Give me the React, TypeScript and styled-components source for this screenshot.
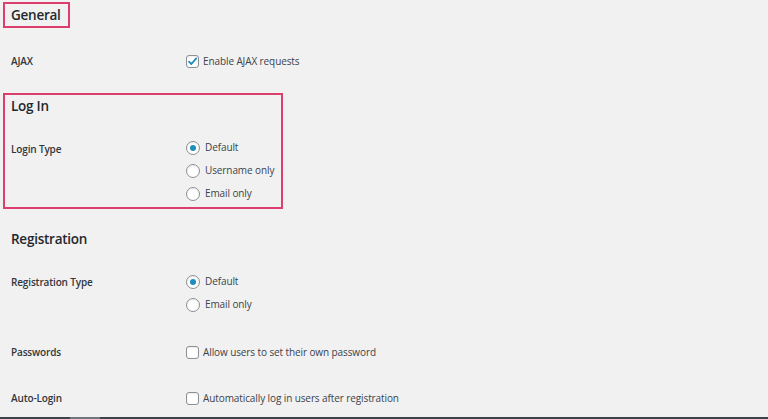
import { createGlobalStyle } from "styled-components"
import styled from "styled-components"

const GlobalStyle = createGlobalStyle`
  html, body {
    margin: 0;
    padding: 0;
    height: 419px;
    overflow: hidden;
    background: #f1f1f1;
  }
  body {
    font-family: "Open Sans", "Noto Sans", Arial, sans-serif;
    color: #1d2327;
  }
`

const Page = styled.div`
  height: 419px;
  display: flex;
  flex-direction: column;
  padding: 2px 0 0 11px;
  box-sizing: border-box;
`

const Highlight = styled.div<{ $width?: number; $gap?: number }>`
  margin: ${p => p.$gap ?? 0}px 0 0 -8px;
  border: 2px solid #dc3f6e;
  padding: 2px 7px 2px 6px;
  width: ${p => (p.$width ? `${p.$width}px` : "auto")};
  align-self: flex-start;
  box-sizing: border-box;
`

const Heading = styled.h2<{ $gap?: number }>`
  margin: ${p => p.$gap ?? 0}px 0 0 0;
  font-size: 13.5px;
  font-weight: 600;
  letter-spacing: -0.25px;
  line-height: 18px;
  color: #23282d;
`

const Row = styled.div<{ $gap: number }>`
  display: grid;
  grid-template-columns: 175px max-content;
  align-items: start;
  margin-top: ${p => p.$gap}px;
  white-space: nowrap;
`

const Label = styled.div<{ $offset?: number }>`
  font-size: 10px;
  font-weight: 600;
  letter-spacing: -0.15px;
  line-height: 18px;
  padding-top: ${p => p.$offset ?? 0}px;
  color: #32373c;
`

const Options = styled.div`
  display: flex;
  flex-direction: column;
`

const Option = styled.label<{ $tall?: boolean }>`
  display: flex;
  align-items: center;
  gap: 4px;
  font-size: 10px;
  letter-spacing: -0.1px;
  line-height: ${p => (p.$tall ? 23 : 18)}px;
  color: #3c434a;
`

const Box = styled.span`
  width: 13px;
  height: 13px;
  box-sizing: border-box;
  border: 1px solid #8c8f94;
  border-radius: 3px;
  background: #fff;
  display: inline-flex;
  align-items: center;
  justify-content: center;
  box-shadow: inset 0 1px 2px rgba(0, 0, 0, 0.08);
  flex-shrink: 0;
`

const Radio = styled.span<{ $checked?: boolean }>`
  width: 14px;
  height: 14px;
  box-sizing: border-box;
  border: 1px solid #8c8f94;
  border-radius: 50%;
  background: #fff;
  display: inline-flex;
  align-items: center;
  justify-content: center;
  box-shadow: inset 0 1px 2px rgba(0, 0, 0, 0.08);
  flex-shrink: 0;
  margin-right: 1px;

  &::after {
    content: "";
    display: ${p => (p.$checked ? "block" : "none")};
    width: 6px;
    height: 6px;
    border-radius: 50%;
    background: #1e8cbe;
  }
`

const Spacer = styled.div`
  flex: 1;
`

const BottomBar = styled.div`
  height: 2px;
  margin-left: -11px;
  background: linear-gradient(to right, #3c434a 0, #3c434a 70px, #6f767d 70px, #6f767d 100px, #3c434a 100px);
`

const Check = () => (
  <svg width="11" height="11" viewBox="0 0 11 11">
    <path d="M2 5.6 L4.4 8 L9.2 2.4" fill="none" stroke="#1e8cbe" strokeWidth="1.8" strokeLinecap="round" strokeLinejoin="round" />
  </svg>
)

const CheckOption = ({ text, checked }: { text: string; checked?: boolean }) => (
  <Option>
    <Box>{checked && <Check />}</Box>
    {text}
  </Option>
)

const RadioOption = ({ text, checked }: { text: string; checked?: boolean }) => (
  <Option $tall>
    <Radio $checked={checked} />
    {text}
  </Option>
)

export default function App() {
  return (
    <>
      <GlobalStyle />
      <Page>
        <Highlight>
          <Heading>General</Heading>
        </Highlight>

        <Row $gap={24}>
          <Label>AJAX</Label>
          <CheckOption text="Enable AJAX requests" checked />
        </Row>

        <Highlight $width={280} $gap={23}>
          <Heading>Log In</Heading>
          <Row $gap={21}>
            <Label $offset={4}>Login Type</Label>
            <Options>
              <RadioOption text="Default" checked />
              <RadioOption text="Username only" />
              <RadioOption text="Email only" />
            </Options>
          </Row>
        </Highlight>

        <Heading $gap={21}>Registration</Heading>

        <Row $gap={22}>
          <Label $offset={3}>Registration Type</Label>
          <Options>
            <RadioOption text="Default" checked />
            <RadioOption text="Email only" />
          </Options>
        </Row>

        <Row $gap={27}>
          <Label>Passwords</Label>
          <CheckOption text="Allow users to set their own password" />
        </Row>

        <Row $gap={28}>
          <Label>Auto-Login</Label>
          <CheckOption text="Automatically log in users after registration" />
        </Row>

        <Spacer />
        <BottomBar />
      </Page>
    </>
  )
}
